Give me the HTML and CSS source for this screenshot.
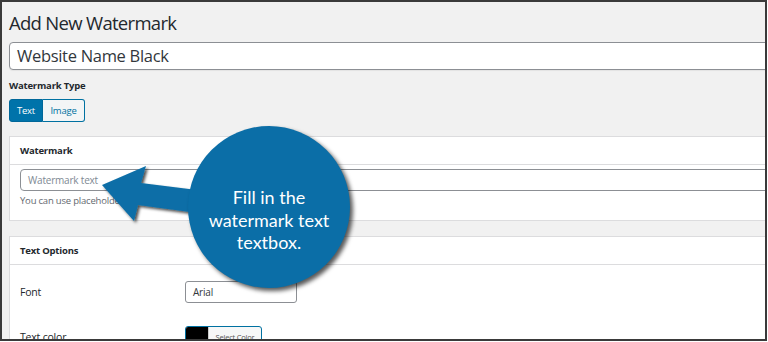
FILE: index.html
```html
<!DOCTYPE html>
<html>
<head>
<meta charset="utf-8">
<link rel="stylesheet" href="styles.css">
</head>
<body>
<div class="frame">
  <div class="wrap">
    <h1 class="title">Add New Watermark</h1>
    <div class="title-input">Website Name Black</div>
    <div class="type-label">Watermark Type</div>
    <div class="btn-group">
      <span class="btn btn-active">Text</span><span class="btn">Image</span>
    </div>

    <div class="box box-watermark">
      <div class="box-head">Watermark</div>
      <div class="box-body">
        <div class="text-input placeholder">Watermark text</div>
        <div class="help">You can use placeholders</div>
      </div>
    </div>

    <div class="box box-options">
      <div class="box-head">Text Options</div>
      <div class="box-body form-grid">
        <div class="field-label">Font</div>
        <div class="field"><div class="select-input">Arial</div></div>
        <div class="field-label">Text color</div>
        <div class="field"><div class="color-btn"><span class="swatch"></span><span class="color-text">Select Color</span></div></div>
      </div>
    </div>
  </div>

  <div class="callout">
    <svg class="arrow" width="768" height="342" viewBox="0 0 768 342">
      <defs>
        <filter id="sh" x="-20%" y="-20%" width="140%" height="140%">
          <feDropShadow dx="2" dy="2" stdDeviation="1.5" flood-color="#000" flood-opacity="0.7"/>
        </filter>
      </defs>
      <polygon filter="url(#sh)" fill="#0b6ea7" points="102,185 146,166 141,183 205,191 205,214 138,205 134,221"/>
    </svg>
    <div class="bubble">
      <div class="bubble-text">Fill in the<br>watermark text<br>textbox.</div>
    </div>
  </div>
</div>
</body>
</html>
```

FILE: styles.css
```css
html, body {
  margin: 0;
  padding: 0;
  background: #ffffff;
}
body {
  width: 768px;
  height: 342px;
  overflow: hidden;
  font-family: "Open Sans", "Noto Sans", sans-serif;
  color: #23282d;
  letter-spacing: -0.2px;
}
.frame {
  position: relative;
  width: 763px;
  height: 337px;
  border: 2px solid #3a3a3a;
  background: #f1f1f1;
  overflow: hidden;
}
.wrap {
  padding: 0 0 0 7px;
}
.title {
  margin: 0;
  padding-top: 7px;
  font-size: 18.5px;
  line-height: 27px;
  font-weight: 400;
  letter-spacing: -0.7px;
  color: #23282d;
}
.title-input {
  margin-top: 6px;
  height: 26px;
  width: 800px;
  border: 1px solid #8c8f94;
  border-radius: 4px;
  background: #fff;
  font-size: 16.5px;
  line-height: 26px;
  letter-spacing: -0.3px;
  padding-left: 7px;
  color: #32373c;
  box-shadow: 0 1px 1px rgba(0,0,0,0.06);
}
.type-label {
  margin-top: 9px;
  font-size: 9.5px;
  font-weight: 700;
  line-height: 14px;
  color: #23282d;
}
.btn-group {
  margin-top: 6px;
  display: flex;
}
.btn {
  display: inline-block;
  box-sizing: border-box;
  height: 23px;
  line-height: 21px;
  font-size: 9.5px;
  border: 1px solid #0071a1;
  background: #f3f5f6;
  color: #0071a1;
  text-align: center;
  padding: 0;
}
.btn-active {
  background: #0073aa;
  color: #fff;
  border-color: #006799;
  border-radius: 3px 0 0 3px;
  width: 34px;
}
.btn:last-child {
  border-left: none;
  border-radius: 0 3px 3px 0;
  width: 42px;
}
.box {
  background: #fff;
  border: 1px solid #dcdcde;
  width: 800px;
  box-sizing: border-box;
}
.box-watermark {
  margin-top: 14px;
  height: 85px;
}
.box-options {
  margin-top: 15px;
  height: 120px;
}
.box-head {
  height: 27px;
  border-bottom: 1px solid #dcdcde;
  padding-left: 10px;
  font-size: 9.5px;
  font-weight: 700;
  line-height: 27px;
  color: #23282d;
}
.box-body {
  padding: 4px 10px 0 10px;
}
.text-input {
  height: 20px;
  border: 1px solid #8c8f94;
  border-radius: 4px;
  background: #fff;
  font-size: 10px;
  line-height: 20px;
  padding-left: 7px;
  width: 780px;
}
.placeholder {
  color: #7e8993;
}
.help {
  margin-top: 3px;
  font-size: 9.5px;
  line-height: 14px;
  color: #646970;
}
.form-grid {
  display: grid;
  grid-template-columns: 165px 1fr;
  row-gap: 23px;
  padding-top: 16px;
  align-items: center;
}
.field-label {
  font-size: 10.5px;
  color: #23282d;
}
.select-input {
  box-sizing: border-box;
  width: 112px;
  height: 22px;
  border: 1px solid #8c8f94;
  border-radius: 3px;
  background: #fff;
  font-size: 10px;
  line-height: 20px;
  padding-left: 7px;
  color: #32373c;
}
.color-btn {
  display: flex;
  box-sizing: border-box;
  width: 77px;
  height: 22px;
  border: 1px solid #0071a1;
  border-radius: 3px;
  overflow: hidden;
  background: #f6f7f7;
}
.swatch {
  width: 22px;
  background: #000;
}
.color-text {
  flex: 1;
  text-align: center;
  font-size: 7.5px;
  line-height: 20px;
  color: #555;
  border-left: 1px solid #ccc;
}
.callout {
  position: absolute;
  left: -2px;
  top: -2px;
  width: 768px;
  height: 342px;
  pointer-events: none;
}
.arrow {
  position: absolute;
  left: 0;
  top: 0;
}
.bubble {
  position: absolute;
  left: 188px;
  top: 126px;
  width: 162px;
  height: 162px;
  border-radius: 50%;
  background: #0b6ea7;
  box-shadow: 3px 3px 4px rgba(0,0,0,0.65);
  display: flex;
  align-items: center;
  justify-content: center;
}
.bubble-text {
  font-family: Lato, "Open Sans", sans-serif;
  font-size: 18px;
  line-height: 22.5px;
  letter-spacing: 0;
  color: #fff;
  text-align: center;
  margin-top: 26px;
}
```
